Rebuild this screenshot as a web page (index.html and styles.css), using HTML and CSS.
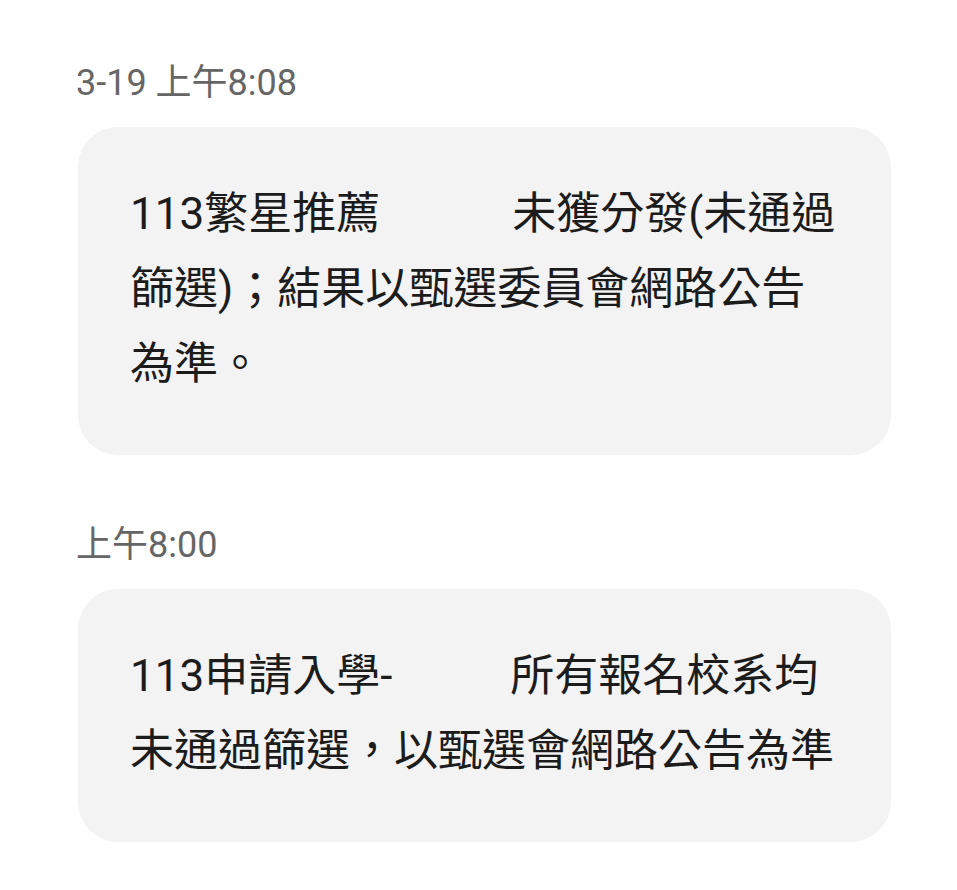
FILE: index.html
```html
<!DOCTYPE html>
<html lang="zh-Hant">
<head>
    <meta charset="UTF-8">
    <meta name="viewport" content="width=device-width, initial-scale=1.0">
    <title>訊息</title>
    <link rel="stylesheet" href="styles.css">
</head>
<body>
    <section class="thread">
        <p class="time">3-19 上午8:08</p>
        <div class="bubble">
            <p>113繁星推薦<span class="hidden-name w1"></span>未獲分發(未通過篩選)；結果以甄選委員會網路公告為準。</p>
        </div>

        <p class="time second">上午8:00</p>
        <div class="bubble">
            <p>113申請入學-<span class="hidden-name w2"></span>所有報名校系均未通過篩選，以甄選會網路公告為準</p>
        </div>
    </section>
</body>
</html>
```

FILE: styles.css
```css
*{
    margin: 0;
    padding: 0;
    box-sizing: border-box;
}

body{
    background: #fff;
    font-family: Roboto, "Noto Sans CJK TC", sans-serif;
    color: #1c1c1c;
}

.thread{
    width: 957px;
    padding: 58px 66px 40px 78px;
}

.time{
    height: 50px;
    line-height: 50px;
    margin-left: -2px;
    margin-bottom: 19px;
    font-size: 36px;
    color: #666;
}

.time.second{
    margin-top: 65px;
}

.bubble{
    background: #f3f3f3;
    border-radius: 40px;
    padding: 50px 52px 53px 52px;
}

.bubble p{
    font-size: 44px;
    line-height: 75px;
}

.hidden-name{
    display: inline-block;
    height: 1px;
}

.hidden-name.w1{
    width: 132px;
}

.hidden-name.w2{
    width: 118px;
}
```
